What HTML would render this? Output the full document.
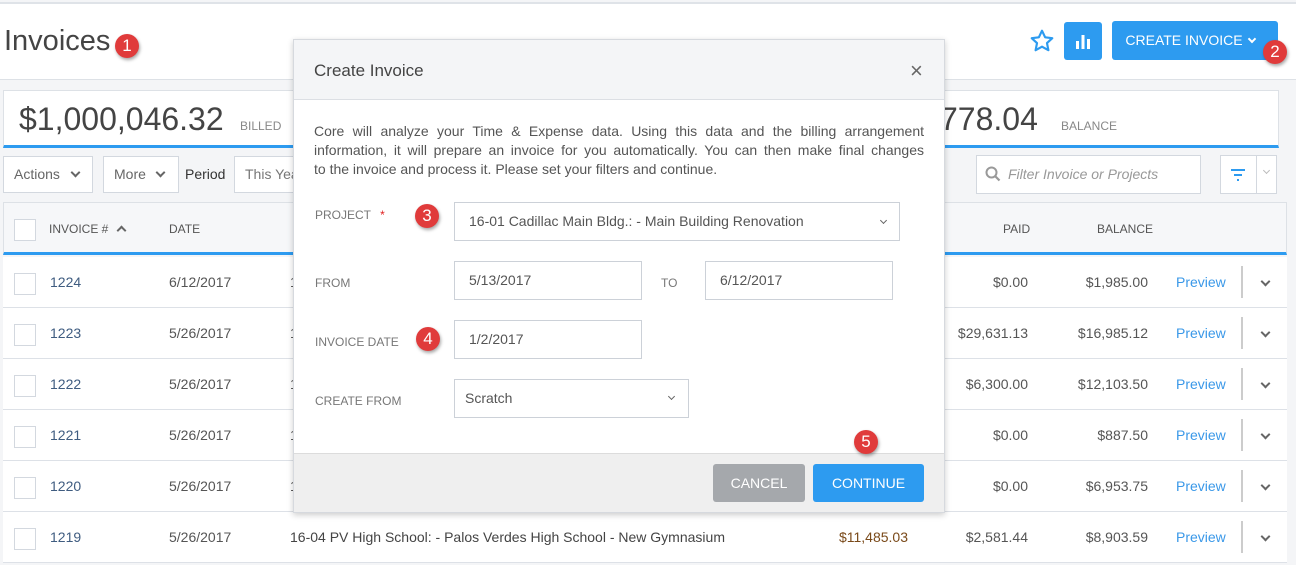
<!DOCTYPE html>
<html><head><meta charset="utf-8"><style>
*{box-sizing:border-box;margin:0;padding:0}
body{width:1296px;height:565px;overflow:hidden;background:#f4f5f7;font-family:"Liberation Sans",sans-serif;color:#555;position:relative}
.abs{position:absolute}
.badge{position:absolute;width:24px;height:24px;border-radius:50%;background:#e03b3b;color:#fff;font-size:17px;text-align:center;line-height:24px;box-shadow:1px 2px 3px rgba(0,0,0,.35)}
.btn{position:absolute;border-radius:3px;color:#fff;font-size:14px;text-align:center}
.row{position:absolute;left:3px;width:1284px;height:51px;background:#fff;border-bottom:1px solid #dde1e7;font-size:14px;color:#555}
.row span{position:absolute;top:17px}
.cb{position:absolute;left:11px;top:16px;width:22px;height:22px;border:1px solid #d3d8df;background:#fff}
.r{text-align:right}
.pv{color:#3a98e8}
.chev{position:absolute;width:7px;height:7px;border-right:2px solid #666;border-bottom:2px solid #666;transform:rotate(45deg)}
.inp{position:absolute;border:1px solid #ccd1d8;background:#fff;font-size:14px;color:#555;padding-left:14px;line-height:36px}
.lbl{position:absolute;left:21px;font-size:12px;color:#777}
.jl{text-align:justify;text-align-last:justify;white-space:nowrap;height:19px}
</style></head><body>
<div class="abs" style="left:0;top:2px;width:1296px;height:78px;background:#fff;border-top:2px solid #dfe3e8;border-bottom:1px solid #dde1e6"></div>
<div class="abs" style="left:4px;top:25px;font-size:29px;color:#444">Invoices</div>
<div class="badge" style="left:115px;top:34px">1</div>
<svg class="abs" style="left:1028px;top:28px" width="28" height="26" viewBox="0 0 24 24"><path d="M12 2.5l2.9 6.1 6.6.8-4.9 4.5 1.3 6.6L12 17.2l-5.9 3.3 1.3-6.6-4.9-4.5 6.6-.8z" fill="none" stroke="#2d9bf0" stroke-width="2" stroke-linejoin="round"/></svg>
<div class="btn" style="left:1064px;top:22px;width:38px;height:38px;background:#2d9bf0"><svg width="38" height="38"><rect x="12" y="19" width="3" height="8" fill="#fff"/><rect x="17.5" y="13" width="3" height="14" fill="#fff"/><rect x="23" y="17" width="3" height="10" fill="#fff"/></svg></div>
<div class="btn" style="left:1112px;top:21px;width:166px;height:39px;background:#2d9bf0;line-height:39px;font-size:14px;padding-right:22px">CREATE INVOICE</div>
<div class="chev" style="left:1249px;top:36px;border-color:#fff;width:6px;height:6px"></div>
<div class="badge" style="left:1263px;top:40px">2</div>

<div class="abs" style="left:3px;top:90px;width:1276px;height:58px;background:#fff;border:1px solid #dde1e6;border-bottom:3px solid #2d9bf0"></div>
<div class="abs" style="left:19px;top:101px;font-size:32px;color:#444">$1,000,046.32</div>
<div class="abs" style="left:240px;top:119px;font-size:12px;color:#888">BILLED</div>
<div class="abs" style="left:940px;top:101px;font-size:32px;color:#444">778.04</div>
<div class="abs" style="left:1061px;top:119px;font-size:12px;color:#888">BALANCE</div>

<div class="abs" style="left:3px;top:156px;width:90px;height:37px;background:#fff;border:1px solid #d3d8df;font-size:14px;line-height:35px;padding-left:10px;color:#666">Actions</div>
<div class="chev" style="left:72px;top:169px"></div>
<div class="abs" style="left:103px;top:156px;width:76px;height:37px;background:#fff;border:1px solid #d3d8df;font-size:14px;line-height:35px;padding-left:10px;color:#666">More</div>
<div class="chev" style="left:157px;top:169px"></div>
<div class="abs" style="left:185px;top:166px;font-size:14px;color:#333">Period</div>
<div class="abs" style="left:234px;top:156px;width:80px;height:37px;background:#fff;border:1px solid #d3d8df;font-size:14px;line-height:35px;padding-left:10px;color:#777">This Year</div>
<div class="abs" style="left:976px;top:155px;width:225px;height:39px;background:#fff;border:1px solid #d3d8df;font-size:14px;line-height:37px;padding-left:31px;color:#999;font-style:italic">Filter Invoice or Projects</div>
<svg class="abs" style="left:985px;top:166px" width="16" height="16"><circle cx="6.5" cy="6.5" r="5" fill="none" stroke="#999" stroke-width="2"/><path d="M10 10l4.5 4.5" stroke="#999" stroke-width="2.2"/></svg>
<div class="abs" style="left:1220px;top:155px;width:57px;height:39px;background:#fff;border:1px solid #d3d8df"></div>
<div class="abs" style="left:1256px;top:155px;width:1px;height:39px;background:#d3d8df"></div>
<svg class="abs" style="left:1230px;top:168px" width="16" height="14"><path d="M1 2h14M4 7h8M7 12h2" stroke="#2d9bf0" stroke-width="2"/></svg>
<div class="chev" style="left:1264px;top:168px;width:5px;height:5px;border-color:#bbb;border-width:1px"></div>

<div class="abs" style="left:3px;top:202px;width:1284px;height:53px;background:#f6f7f9;border:1px solid #dde1e6;border-bottom:3px solid #2d9bf0"></div>
<div class="cb" style="left:14px;top:219px"></div>
<div class="abs" style="left:49px;top:222px;font-size:12px;color:#555">INVOICE #</div>
<div class="chev" style="left:118px;top:227px;transform:rotate(225deg)"></div>
<div class="abs" style="left:169px;top:222px;font-size:12px;color:#555">DATE</div>
<div class="abs" style="left:1003px;top:222px;font-size:12px;color:#555">PAID</div>
<div class="abs" style="left:1097px;top:222px;font-size:12px;color:#555">BALANCE</div>

<div class="row" style="top:257px"><div class="cb"></div><span style="left:47px;color:#3f5c80">1224</span><span style="left:166px">6/12/2017</span><span style="left:287px">1</span><span class="r" style="right:259px">$0.00</span><span class="r" style="right:139px">$1,985.00</span><span class="pv" style="left:1173px">Preview</span></div>
<div class="row" style="top:308px"><div class="cb"></div><span style="left:47px;color:#3f5c80">1223</span><span style="left:166px">5/26/2017</span><span style="left:287px">1</span><span class="r" style="right:259px">$29,631.13</span><span class="r" style="right:139px">$16,985.12</span><span class="pv" style="left:1173px">Preview</span></div>
<div class="row" style="top:359px"><div class="cb"></div><span style="left:47px;color:#3f5c80">1222</span><span style="left:166px">5/26/2017</span><span style="left:287px">1</span><span class="r" style="right:259px">$6,300.00</span><span class="r" style="right:139px">$12,103.50</span><span class="pv" style="left:1173px">Preview</span></div>
<div class="row" style="top:410px"><div class="cb"></div><span style="left:47px;color:#3f5c80">1221</span><span style="left:166px">5/26/2017</span><span style="left:287px">1</span><span class="r" style="right:259px">$0.00</span><span class="r" style="right:139px">$887.50</span><span class="pv" style="left:1173px">Preview</span></div>
<div class="row" style="top:461px"><div class="cb"></div><span style="left:47px;color:#3f5c80">1220</span><span style="left:166px">5/26/2017</span><span style="left:287px">1</span><span class="r" style="right:259px">$0.00</span><span class="r" style="right:139px">$6,953.75</span><span class="pv" style="left:1173px">Preview</span></div>
<div class="row" style="top:512px"><div class="cb"></div><span style="left:47px;color:#3f5c80">1219</span><span style="left:166px">5/26/2017</span><span style="left:287px;color:#444">16-04 PV High School: - Palos Verdes High School - New Gymnasium</span><span class="r" style="right:379px;color:#7a4a1a">$11,485.03</span><span class="r" style="right:259px">$2,581.44</span><span class="r" style="right:139px">$8,903.59</span><span class="pv" style="left:1173px">Preview</span></div>
<div class="abs" style="left:1241px;top:266px;width:2px;height:32px;background:#ccc"></div>
<div class="abs" style="left:1241px;top:317px;width:2px;height:32px;background:#ccc"></div>
<div class="abs" style="left:1241px;top:368px;width:2px;height:32px;background:#ccc"></div>
<div class="abs" style="left:1241px;top:419px;width:2px;height:32px;background:#ccc"></div>
<div class="abs" style="left:1241px;top:470px;width:2px;height:32px;background:#ccc"></div>
<div class="abs" style="left:1241px;top:521px;width:2px;height:32px;background:#ccc"></div>
<div class="chev" style="left:1262px;top:278px"></div>
<div class="chev" style="left:1262px;top:329px"></div>
<div class="chev" style="left:1262px;top:380px"></div>
<div class="chev" style="left:1262px;top:431px"></div>
<div class="chev" style="left:1262px;top:482px"></div>
<div class="chev" style="left:1262px;top:533px"></div>

<!-- modal -->
<div class="abs" style="left:293px;top:39px;width:652px;height:474px;background:#fff;border:1px solid #d6d9de;box-shadow:0 2px 6px rgba(0,0,0,.2)">
 <div class="abs" style="left:0;top:0;width:650px;height:60px;background:#f4f5f7;border-bottom:1px solid #dcdfe4"></div>
 <div class="abs" style="left:20px;top:21px;font-size:17px;color:#444">Create Invoice</div>
 <div class="abs" style="left:616px;top:18px;font-size:22px;color:#666">×</div>
 <div class="abs" style="left:20px;top:82px;width:610px;font-size:14px;line-height:19px;color:#555">
  <div class="jl">Core will analyze your Time &amp; Expense data. Using this data and the billing arrangement</div>
  <div class="jl">information, it will prepare an invoice for you automatically. You can then make final changes</div>
  <div style="white-space:nowrap">to the invoice and process it. Please set your filters and continue.</div>
 </div>
 <div class="lbl" style="top:168px">PROJECT <span style="color:#e02020;margin-left:6px">*</span></div>
 <div class="inp" style="left:160px;top:162px;width:446px;height:39px">16-01 Cadillac Main Bldg.: - Main Building Renovation</div>
 <div class="chev" style="left:587px;top:178px;width:5px;height:5px;border-width:1px"></div>
 <div class="lbl" style="top:236px">FROM</div>
 <div class="inp" style="left:160px;top:221px;width:188px;height:39px">5/13/2017</div>
 <div class="lbl" style="left:367px;top:236px">TO</div>
 <div class="inp" style="left:411px;top:221px;width:188px;height:39px">6/12/2017</div>
 <div class="lbl" style="top:295px">INVOICE DATE</div>
 <div class="inp" style="left:160px;top:280px;width:188px;height:39px">1/2/2017</div>
 <div class="lbl" style="top:354px">CREATE FROM</div>
 <div class="inp" style="left:160px;top:339px;width:235px;height:39px;padding-left:10px">Scratch</div>
 <div class="chev" style="left:375px;top:354px;width:5px;height:5px;border-width:1px"></div>
 <div class="abs" style="left:0;top:413px;width:650px;height:59px;background:#efefef;border-top:1px solid #dcdcdc"></div>
 <div class="btn" style="left:419px;top:424px;width:92px;height:38px;line-height:38px;background:#a5a8ac">CANCEL</div>
 <div class="btn" style="left:519px;top:424px;width:111px;height:38px;line-height:38px;background:#2d9bf0">CONTINUE</div>
</div>
<div class="badge" style="left:415px;top:204px">3</div>
<div class="badge" style="left:416px;top:327px">4</div>
<div class="badge" style="left:854px;top:430px">5</div>
</body></html>
